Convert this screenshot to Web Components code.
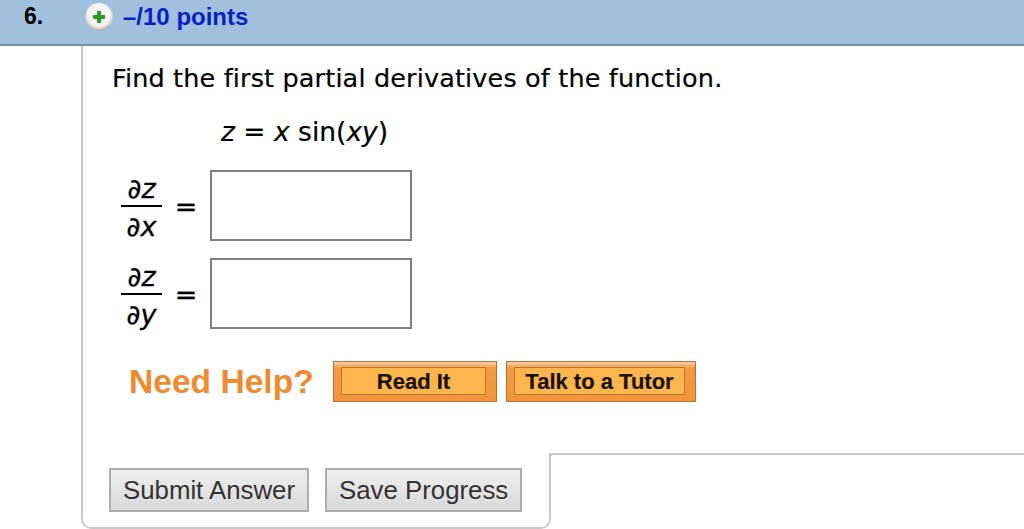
<!DOCTYPE html>
<html>
<head>
<meta charset="utf-8">
<title>Question 6</title>
<style>
  html, body { margin: 0; padding: 0; background: #fff; }
  body { width: 1024px; height: 529px; overflow: hidden; }
</style>
</head>
<body>
<question-panel number="6." points="–/10 points">
  <prompt-text>Find the first partial derivatives of the function.</prompt-text>
  <equation-line><i>z</i> = <i>x</i> sin(<i>xy</i>)</equation-line>
  <answer-row top="z" bottom="x"></answer-row>
  <answer-row top="z" bottom="y"></answer-row>
  <help-bar slot="help"></help-bar>
  <grey-button slot="actions">Submit Answer</grey-button>
  <grey-button slot="actions">Save Progress</grey-button>
</question-panel>

<script>
class QuestionPanel extends HTMLElement {
  constructor() {
    super();
    this.attachShadow({ mode: 'open' });
  }

  connectedCallback() {
    const number = this.getAttribute('number') || '';
    const points = this.getAttribute('points') || '';

    this.shadowRoot.innerHTML = `
      <style>
        :host {
          display: flex;
          flex-direction: column;
          height: 529px;
          font-family: "Liberation Sans", Arial, sans-serif;
        }
        .head {
          display: flex;
          align-items: center;
          flex: none;
          padding: 0 0 11px 24px;
          box-sizing: border-box;
          background: #a0c0de;
          border-bottom: 2px solid #7b8fa3;
          height: 46px;
        }
        .num {
          width: 60px;
          font-size: 23px;
          font-weight: bold;
          color: #000;
        }
        .pts {
          margin-left: 9px;
          font-size: 24px;
          font-weight: bold;
          color: #0a22c4;
        }
        svg { display: block; flex: none; }
        .upper {
          flex: 1;
          margin-left: 81px;
          border-left: 2px solid #c8c8c8;
          padding: 17px 0 0 29px;
        }
        .lower {
          display: flex;
          flex: none;
          height: 76px;
        }
        .actions {
          display: flex;
          gap: 16px;
          box-sizing: border-box;
          width: 470px;
          height: 76px;
          margin-left: 81px;
          padding: 15px 0 0 26px;
          border: 2px solid #c8c8c8;
          border-top: 0;
          border-radius: 0 0 10px 10px;
        }
        .edge {
          flex: 1;
          height: 20px;
          margin-left: -2px;
          border-top: 2px solid #c8c8c8;
          border-left: 2px solid #c8c8c8;
          border-top-left-radius: 4px;
        }
      </style>
      <div class="head">
        <span class="num">${number}</span>
        <svg width="30" height="30" viewBox="0 0 30 30">
          <defs>
            <radialGradient id="knob" cx="50%" cy="42%" r="58%">
              <stop offset="0" stop-color="#ffffff"/>
              <stop offset="0.7" stop-color="#f2f2f0"/>
              <stop offset="1" stop-color="#aeaeaa"/>
            </radialGradient>
          </defs>
          <circle cx="15" cy="15" r="14" fill="url(#knob)"/>
          <path d="M13 9h4v4h4v4h-4v4h-4v-4H9v-4h4z" fill="#2a9a2a"/>
        </svg>
        <span class="pts">${points}</span>
      </div>
      <div class="upper">
        <slot></slot>
        <slot name="help"></slot>
      </div>
      <div class="lower">
        <div class="actions"><slot name="actions"></slot></div>
        <div class="edge"></div>
      </div>
    `;
  }
}

class PromptText extends HTMLElement {
  constructor() {
    super();
    this.attachShadow({ mode: 'open' });
    this.shadowRoot.innerHTML = `
      <style>
        :host {
          display: block;
          font: 25.5px/30px "DejaVu Sans", Verdana, sans-serif;
          color: #000;
          letter-spacing: 0.15px;
          -webkit-text-stroke: 0.2px #000;
        }
      </style>
      <slot></slot>
    `;
  }
}

class EquationLine extends HTMLElement {
  constructor() {
    super();
    this.attachShadow({ mode: 'open' });
    this.shadowRoot.innerHTML = `
      <style>
        :host {
          display: block;
          margin: 24px 0 23px 109px;
          font: 26.5px/30px "DejaVu Sans", Verdana, sans-serif;
          color: #000;
          -webkit-text-stroke: 0.2px #000;
        }
      </style>
      <slot></slot>
    `;
  }
}

class AnswerRow extends HTMLElement {
  constructor() {
    super();
    this.attachShadow({ mode: 'open' });
  }

  connectedCallback() {
    const top = this.getAttribute('top') || '';
    const bottom = this.getAttribute('bottom') || '';

    this.shadowRoot.innerHTML = `
      <style>
        :host {
          display: flex;
          align-items: center;
          height: 71px;
          margin: 0 0 17px 9px;
          font: 27px/30px "DejaVu Sans", Verdana, sans-serif;
          color: #000;
          -webkit-text-stroke: 0.3px #000;
        }
        .frac {
          display: flex;
          flex-direction: column;
          align-items: center;
          width: 41px;
          font-style: italic;
        }
        .frac span { line-height: 32px; height: 32px; }
        .frac span:first-child { border-bottom: 2px solid #000; align-self: stretch; text-align: center; }
        .frac span:last-child { line-height: 40px; }
        .eq { width: 48px; text-align: center; position: relative; top: 1px; }
        .box {
          box-sizing: border-box;
          width: 202px;
          height: 71px;
          background: #fff;
          border: 2px solid #808080;
          -webkit-text-stroke: 0;
        }
      </style>
      <div class="frac"><span>∂${top}</span><span>∂${bottom}</span></div>
      <div class="eq">=</div>
      <div class="box"></div>
    `;
  }
}

class HelpBar extends HTMLElement {
  constructor() {
    super();
    this.attachShadow({ mode: 'open' });
    this.shadowRoot.innerHTML = `
      <style>
        :host {
          display: flex;
          align-items: center;
          margin: 32px 0 0 17px;
          height: 41px;
          font-family: "Liberation Sans", Arial, sans-serif;
        }
        .label {
          width: 204px;
          font-size: 33.6px;
          font-weight: bold;
          color: #ee8b2e;
        }
        .btn {
          box-sizing: border-box;
          height: 41px;
          padding: 5px 10px 6px 7px;
          margin-right: 9px;
          background: linear-gradient(#f8d2ae 0, #f3993f 6px, #f2953a 100%);
          border: 1px solid #b4723a;
        }
        .btn span {
          display: flex;
          align-items: center;
          justify-content: center;
          box-sizing: border-box;
          height: 100%;
          padding-top: 2px;
          background: #fdb54e;
          border: 1px solid #b97a34;
          border-radius: 1px;
          font-size: 22px;
          font-weight: bold;
          color: #1a1206;
          white-space: nowrap;
          -webkit-text-stroke: 0.2px #1a1206;
        }
        .read { width: 164px; }
        .tutor { width: 190px; }
      </style>
      <div class="label">Need Help?</div>
      <div class="btn read"><span>Read It</span></div>
      <div class="btn tutor"><span>Talk to a Tutor</span></div>
    `;
  }
}

class GreyButton extends HTMLElement {
  constructor() {
    super();
    this.attachShadow({ mode: 'open' });
    this.shadowRoot.innerHTML = `
      <style>
        :host {
          display: flex;
          align-items: center;
          box-sizing: border-box;
          height: 44px;
          padding: 0 12px;
          background: linear-gradient(#efefef, #d9d9d9);
          border: 2px solid #aeaeae;
          font: 25.8px "Liberation Sans", Arial, sans-serif;
          color: #333;
          white-space: nowrap;
        }
      </style>
      <slot></slot>
    `;
  }
}

customElements.define('question-panel', QuestionPanel);
customElements.define('prompt-text', PromptText);
customElements.define('equation-line', EquationLine);
customElements.define('answer-row', AnswerRow);
customElements.define('help-bar', HelpBar);
customElements.define('grey-button', GreyButton);
</script>
</body>
</html>
